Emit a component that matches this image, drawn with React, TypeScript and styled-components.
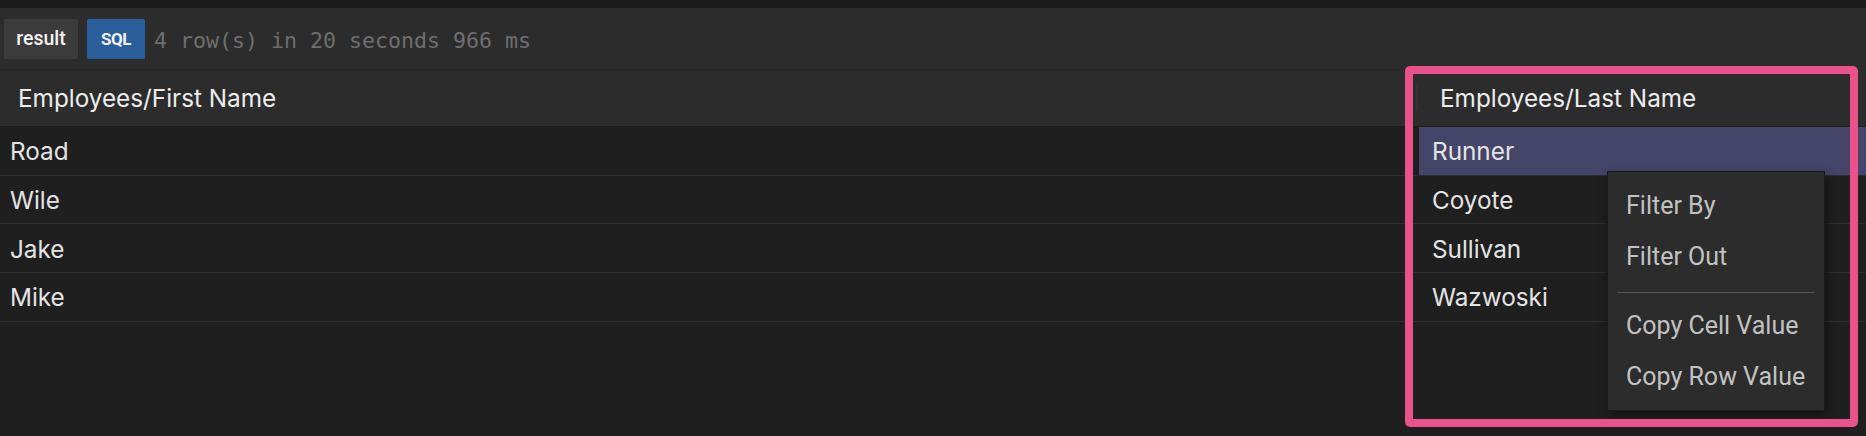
import styled, { createGlobalStyle, css } from 'styled-components';

const GlobalStyle = createGlobalStyle`
    html, body {
        margin: 0;
        padding: 0;
        background: #1f1f1f;
        overflow: hidden;
    }
    * {
        box-sizing: border-box;
    }
`;

const Page = styled.div`
    position: relative;
    display: flex;
    flex-direction: column;
    width: 1866px;
    height: 436px;
    background: #1f1f1f;
    font-family: Inter, "Noto Sans", sans-serif;
`;

const TopStrip = styled.div`
    height: 8px;
    background: #1b1b1b;
`;

const Toolbar = styled.div`
    display: flex;
    align-items: center;
    gap: 9px;
    height: 62px;
    padding: 0 4px;
    background: #2c2c2c;
    border-bottom: 1px solid #272727;
`;

const Tag = styled.div<{ $kind: 'result' | 'sql' }>`
    display: flex;
    align-items: center;
    justify-content: center;
    height: 40px;
    border-radius: 2px;
    color: #f2f2f2;
    ${({ $kind }) =>
        $kind === 'result'
            ? css`
                  width: 74px;
                  background: #3b3b3b;
                  font-family: Roboto, sans-serif;
                  font-weight: 500;
                  font-size: 19.5px;
              `
            : css`
                  width: 58px;
                  background: #2b5f9b;
                  font-family: Roboto, sans-serif;
                  font-weight: 700;
                  font-size: 17px;
                  letter-spacing: -0.5px;
              `}
`;

const Timing = styled.span`
    font-family: "DejaVu Sans Mono", "Liberation Mono", monospace;
    font-size: 21.6px;
    color: #6e6e6e;
    padding-top: 3px;
`;

const Table = styled.div`
    display: grid;
    grid-template-columns: 1419px 1fr;
`;

const HeaderCell = styled.div<{ $divider?: boolean }>`
    position: relative;
    height: 57px;
    display: flex;
    align-items: center;
    padding-left: ${({ $divider }) => ($divider ? '21px' : '18px')};
    background: #2c2c2c;
    border-bottom: 1px solid #1c1c1c;
    color: #ededed;
    font-size: 24.3px;

    ${({ $divider }) =>
        $divider &&
        css`
            &::before {
                content: '';
                position: absolute;
                left: -3px;
                top: 14px;
                bottom: 15px;
                width: 2px;
                background: #333333;
            }
        `}
`;

const Cell = styled.div<{ $second?: boolean; $selected?: boolean }>`
    height: 48.67px;
    display: flex;
    align-items: center;
    padding-left: ${({ $second }) => ($second ? '13px' : '10px')};
    padding-top: 1px;
    border-bottom: 1px solid #2d2d2d;
    color: #e4e4e4;
    font-size: 24.3px;
    background: ${({ $selected }) => ($selected ? '#45456a' : 'transparent')};
`;

const Menu = styled.div`
    position: absolute;
    left: 1607px;
    top: 171px;
    width: 218px;
    padding: 8px 0 8px;
    background: #2c2c2c;
    border: 1px solid #1a1a1a;
    box-shadow: 2px 4px 10px rgba(0, 0, 0, 0.45);
    font-family: Roboto, sans-serif;
`;

const MenuItem = styled.div`
    height: 51px;
    display: flex;
    align-items: center;
    padding-left: 18px;
    color: #c2c2c2;
    font-size: 25px;
`;

const MenuDivider = styled.div`
    height: 1px;
    margin: 10px 9px 7px;
    background: #575757;
`;

const Annotation = styled.div`
    position: absolute;
    left: 1405px;
    top: 66px;
    width: 453px;
    height: 361px;
    border: 8px solid #e9528a;
    border-radius: 5px;
    pointer-events: none;
`;

const rows = [
    { first: 'Road', last: 'Runner' },
    { first: 'Wile', last: 'Coyote' },
    { first: 'Jake', last: 'Sullivan' },
    { first: 'Mike', last: 'Wazwoski' },
];

export default function App() {
    return (
        <>
            <GlobalStyle />
            <Page>
                <TopStrip />
                <Toolbar>
                    <Tag $kind="result">result</Tag>
                    <Tag $kind="sql">SQL</Tag>
                    <Timing>4 row(s) in 20 seconds 966 ms</Timing>
                </Toolbar>
                <Table>
                    <HeaderCell>Employees/First Name</HeaderCell>
                    <HeaderCell $divider>Employees/Last Name</HeaderCell>
                    {rows.map((row, i) => [
                        <Cell key={`f${i}`}>{row.first}</Cell>,
                        <Cell key={`l${i}`} $second $selected={i === 0}>
                            {row.last}
                        </Cell>,
                    ])}
                </Table>
                <Menu>
                    <MenuItem>Filter By</MenuItem>
                    <MenuItem>Filter Out</MenuItem>
                    <MenuDivider />
                    <MenuItem>Copy Cell Value</MenuItem>
                    <MenuItem>Copy Row Value</MenuItem>
                </Menu>
                <Annotation />
            </Page>
        </>
    );
}
